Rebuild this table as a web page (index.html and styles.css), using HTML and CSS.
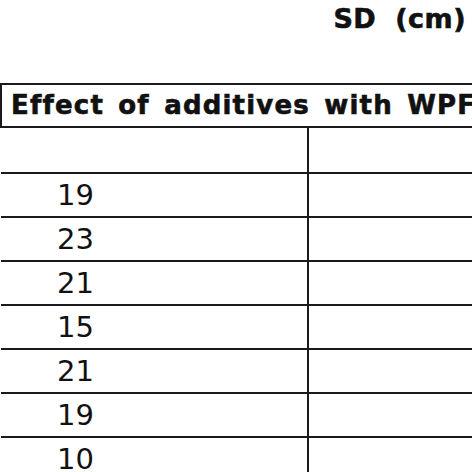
FILE: index.html
```html
<!DOCTYPE html>
<html lang="en">
<head>
  <meta charset="UTF-8" />
  <meta name="viewport" content="width=device-width, initial-scale=1.0" />
  <title>Effect of additives with WPF</title>
  <link rel="stylesheet" href="styles.css">
</head>
<body>
  <div class="titulo">SD (cm)</div>
  <table class="tabla">
    <tr class="cabecera">
      <th colspan="2">Effect of additives with WPF</th>
    </tr>
    <tr class="vacia">
      <td class="valor"></td>
      <td></td>
    </tr>
    <tr><td class="valor">19</td><td></td></tr>
    <tr><td class="valor">23</td><td></td></tr>
    <tr><td class="valor">21</td><td></td></tr>
    <tr><td class="valor">15</td><td></td></tr>
    <tr><td class="valor">21</td><td></td></tr>
    <tr><td class="valor">19</td><td></td></tr>
    <tr><td class="valor">10</td><td></td></tr>
  </table>
</body>
</html>
```

FILE: styles.css
```css
body {
  font-family: "DejaVu Sans", Verdana, sans-serif;
  margin: 0;
  background: #fff;
  color: #111;
  width: 472px;
  height: 472px;
  overflow: hidden;
}

.titulo {
  height: 83px;
  box-sizing: border-box;
  padding: 4px 6px 0 0;
  text-align: right;
  font-size: 27px;
  font-weight: bold;
  letter-spacing: 0.5px;
  word-spacing: 9px;
  line-height: 30px;
  -webkit-text-stroke: 0.6px #111;
}

.tabla {
  border-collapse: collapse;
  width: 620px;
}

.tabla th,
.tabla td {
  border-top: 2px solid #1a1a1a;
  border-bottom: 2px solid #1a1a1a;
  padding: 0;
}

.cabecera th {
  height: 39px;
  text-align: left;
  padding: 0 0 2px 9px;
  font-size: 26px;
  line-height: 30px;
  letter-spacing: 1.2px;
  word-spacing: 4px;
  white-space: nowrap;
  border-left: 2px solid #1a1a1a;
  -webkit-text-stroke: 0.6px #111;
}

.tabla td {
  height: 42px;
  font-size: 29px;
  line-height: 30px;
}

.vacia td {
  height: 44px;
}

.valor {
  width: 250px;
  padding-left: 56px !important;
  border-right: 2px solid #1a1a1a;
}
```
